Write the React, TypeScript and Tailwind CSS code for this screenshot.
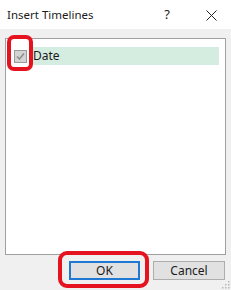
import React from "react";

export default function App() {
  return (
    <div
      className="relative w-[231px] h-[290px] bg-[#f0f0f0] overflow-hidden text-[#1b1b1b]"
      style={{ fontFamily: '"Segoe UI", "Noto Sans", "Liberation Sans", sans-serif' }}
    >
      <div className="h-[29px] bg-white flex items-center pl-[7px] pr-[14px]">
        <span className="text-[11.5px] flex-1">Insert Timelines</span>
        <span className="text-[13px] mr-[36px]">?</span>
        <svg width="11" height="11" viewBox="0 0 11 11" className="mt-[1px]">
          <path d="M0.5 0.5 L10.5 10.5 M10.5 0.5 L0.5 10.5" stroke="#222" strokeWidth="1" />
        </svg>
      </div>
      <div className="ml-[5px] mt-[9px] w-[221px] h-[217px] bg-white border border-[#a0a0a0] pt-[8px] pl-[8px] pr-[6px]">
        <div className="flex items-center h-[18px]">
          <div className="w-[13px] h-[13px] border border-[#9a9a9a] bg-[#d4d4d4] flex items-center justify-center shrink-0">
            <svg width="11" height="11" viewBox="0 0 11 11">
              <path d="M2 5.5 L4.5 8 L9 2.5" stroke="#8a8a8a" strokeWidth="1.5" fill="none" />
            </svg>
          </div>
          <div className="ml-[6px] flex-1 h-[18px] bg-[#d5ede1] flex items-center text-[12px]">Date</div>
        </div>
      </div>
      <div className="flex ml-[69px] mt-[6px] gap-[13px]">
        <div className="w-[71px] h-[19px] border-2 border-[#1f78d1] bg-[#e1e1e1] flex items-center justify-center text-[12px]">
          OK
        </div>
        <div className="w-[72px] h-[19px] border border-[#adadad] bg-[#e1e1e1] flex items-center justify-center text-[12px]">
          Cancel
        </div>
      </div>
      <div className="absolute left-[7px] top-[35px] w-[26px] h-[36px] border-[4px] border-[#e5131f] rounded-[7px]" />
      <div className="absolute left-[58px] top-[251px] w-[91px] h-[37px] border-[4px] border-[#e5131f] rounded-[9px]" />
      <svg className="absolute right-[1px] bottom-[1px]" width="8" height="8" viewBox="0 0 8 8">
        <rect x="6" y="0" width="1.5" height="1.5" fill="#b8b8b8" />
        <rect x="3" y="3" width="1.5" height="1.5" fill="#b8b8b8" />
        <rect x="6" y="3" width="1.5" height="1.5" fill="#b8b8b8" />
        <rect x="0" y="6" width="1.5" height="1.5" fill="#b8b8b8" />
        <rect x="3" y="6" width="1.5" height="1.5" fill="#b8b8b8" />
        <rect x="6" y="6" width="1.5" height="1.5" fill="#b8b8b8" />
      </svg>
    </div>
  );
}
